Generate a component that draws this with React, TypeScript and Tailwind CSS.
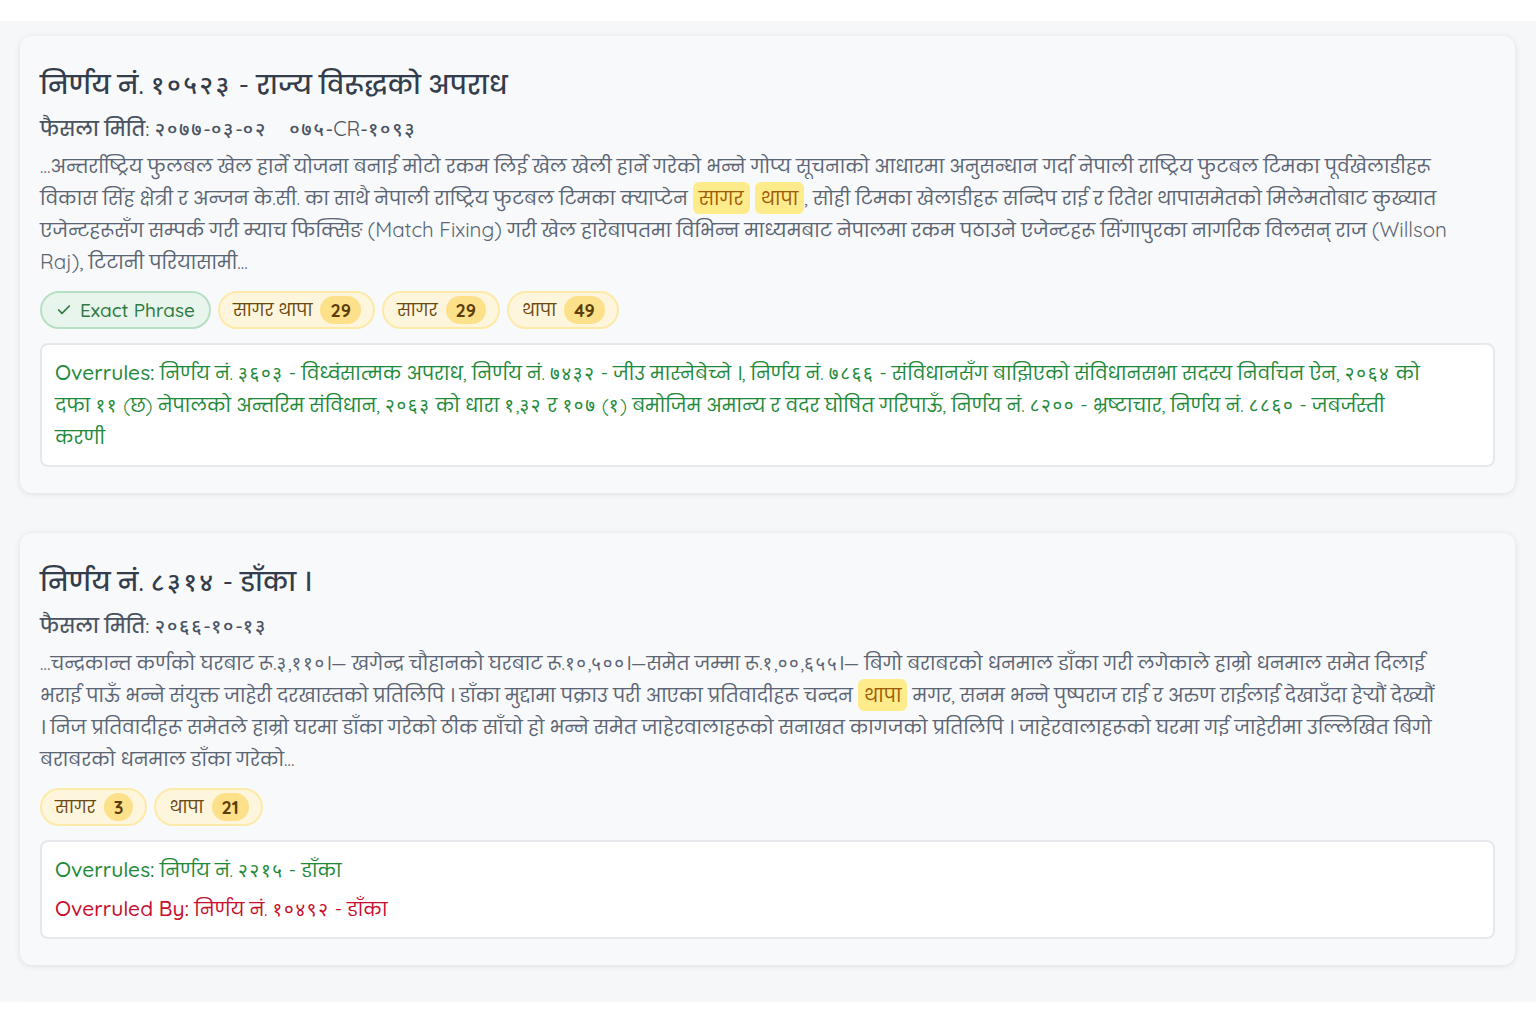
import * as React from 'react';

const base = { fontFamily: '"Quicksand", "Poppins", sans-serif' };
const digitFont = {
  fontFamily: '"Noto Sans Devanagari", "Noto Sans", sans-serif',
  letterSpacing: '0.09em',
  lineHeight: 1,
};

// Poppins draws Devanagari digits as latin ones, so give digit runs another face
function d(s: string): React.ReactNode {
  return s.split(/([०-९]+)/).map((part, i) =>
    /[०-९]/.test(part) ? (
      <span key={i} style={digitFont}>
        {part}
      </span>
    ) : (
      part
    ),
  );
}

// latin runs inside Devanagari text sit a touch bigger in the design
function L({ children }: { children: string }) {
  return <span className="text-[20.5px] leading-none">{children}</span>;
}

function Label({ children }: { children: string }) {
  return <span className="text-[21px] font-medium leading-none">{children}</span>;
}

type Chip = { label: string; count: number };

function Hl({ children }: { children: string }) {
  return (
    <mark className="rounded-md bg-[#fdeb8c] px-[6px] py-[4px] text-[#a15c07]">
      {children}
    </mark>
  );
}

function KeywordChip({ label, count }: Chip) {
  return (
    <span className="inline-flex h-[38px] items-center gap-[8px] rounded-full border-2 border-[#fde9a8] bg-[#fef6dc] pl-[13px] pr-[12px] text-[17px] text-[#6b4a12]">
      {label}
      <span className="inline-flex h-[28px] min-w-[28px] items-center justify-center rounded-full bg-[#fde08a] px-[10px] text-[18px] font-bold text-[#5c3d0a]">
        {count}
      </span>
    </span>
  );
}

function ExactChip() {
  return (
    <span className="inline-flex h-[38px] items-center gap-[8px] rounded-full border-2 border-[#b7dfc4] bg-[#e8f5ec] px-[14px] text-[19px] font-medium text-[#2f7a44]">
      <svg
        className="size-4"
        viewBox="0 0 24 24"
        fill="none"
        stroke="currentColor"
        strokeWidth="2.5"
        strokeLinecap="round"
        strokeLinejoin="round"
      >
        <path d="M20 6 9 17l-5-5" />
      </svg>
      Exact Phrase
    </span>
  );
}

function Card({
  title,
  meta,
  snippet,
  chips,
  exact,
  relations,
}: {
  title: string;
  meta: React.ReactNode;
  snippet: React.ReactNode;
  chips: Chip[];
  exact?: boolean;
  relations: React.ReactNode;
}) {
  return (
    <div className="rounded-xl bg-[#f8f9fb] px-5 pb-[26px] pt-[29px] shadow-[0_1px_6px_rgba(15,23,42,0.10)]">
      <h2 className="text-[26px] font-medium leading-[40px] text-[#333d4b]">
        {d(title)}
      </h2>
      <div className="mt-[9px] text-[19.5px] font-medium leading-[30px] text-[#4a5462]">
        {meta}
      </div>
      <p className="mt-[6px] text-[18.7px] leading-[32px] text-[#5b6573]">
        {snippet}
      </p>
      <div className="mt-[13px] flex gap-[7px]">
        {exact && <ExactChip />}
        {chips.map((c) => (
          <KeywordChip key={c.label} {...c} />
        ))}
      </div>
      <div className="mt-[14px] rounded-lg border-2 border-[#e6e8eb] bg-white px-[13px] py-[12px] text-[18.7px] leading-[32px]">
        {relations}
      </div>
    </div>
  );
}

export default function App() {
  return (
    <div className="min-h-screen bg-white" style={base}>
      <div className="mt-[21px] h-[981px] overflow-hidden bg-[#f6f7f9]">
        <div className="flex w-[1515px] flex-col gap-10 pl-5 pt-[15px]">
          <Card
            title="निर्णय नं. १०५२३ - राज्य विरूद्धको अपराध"
            meta={
              <span>
                {d('फैसला मिति: २०७७-०३-०२')}
                <span className="ml-[22px]">
                  {d('०७५-')}
                  <span className="text-[20.5px] font-normal leading-none">CR</span>
                  {d('-१०९३')}
                </span>
              </span>
            }
            snippet={
              <>
                …अन्तर्राष्ट्रिय फुलबल खेल हार्ने योजना बनाई मोटो रकम लिई खेल खेली
                हार्ने गरेको भन्ने गोप्य सूचनाको आधारमा अनुसन्धान गर्दा नेपाली
                राष्ट्रिय फुटबल टिमका पूर्वखेलाडीहरू
                <br />
                विकास सिंह क्षेत्री र अन्जन के.सी. का साथै नेपाली राष्ट्रिय फुटबल
                टिमका क्याप्टेन <Hl>सागर</Hl> <Hl>थापा</Hl>, सोही टिमका खेलाडीहरू
                सन्दिप राई र रितेश थापासमेतको मिलेमतोबाट कुख्यात
                <br />
                एजेन्टहरूसँग सम्पर्क गरी म्याच फिक्सिङ <L>(Match Fixing)</L> गरी खेल
                हारेबापतमा विभिन्न माध्यमबाट नेपालमा रकम पठाउने एजेन्टहरू
                सिंगापुरका नागरिक विलसन् राज <L>(Willson</L>
                <br />
                <L>Raj),</L> टिटानी परियासामी…
              </>
            }
            exact
            chips={[
              { label: 'सागर थापा', count: 29 },
              { label: 'सागर', count: 29 },
              { label: 'थापा', count: 49 },
            ]}
            relations={
              <p className="text-[#1f8a3b]">
                <Label>Overrules:</Label>{' '}
                {d(
                  'निर्णय नं. ३६०३ - विध्वंसात्मक अपराध, निर्णय नं. ७४३२ - जीउ मास्नेबेच्ने ।, निर्णय नं. ७८६६ - संविधानसँग बाझिएको संविधानसभा सदस्य निर्वाचन ऐन, २०६४ को',
                )}
                <br />
                {d(
                  'दफा ११ (छ) नेपालको अन्तरिम संविधान, २०६३ को धारा १,३२ र १०७ (१) बमोजिम अमान्य र वदर घोषित गरिपाऊँ, निर्णय नं. ८२०० - भ्रष्टाचार, निर्णय नं. ८८६० - जबर्जस्ती',
                )}
                <br />
                करणी
              </p>
            }
          />
          <Card
            title="निर्णय नं. ८३१४ - डाँका ।"
            meta={<span>{d('फैसला मिति: २०६६-१०-१३')}</span>}
            snippet={
              <>
                {d(
                  '…चन्द्रकान्त कर्णको घरबाट रू.३,११०।— खगेन्द्र चौहानको घरबाट रू.१०,५००।—समेत जम्मा रू.१,००,६५५।— बिगो बराबरको धनमाल डाँका गरी लगेकाले हाम्रो धनमाल समेत दिलाई',
                )}
                <br />
                भराई पाऊँ भन्ने संयुक्त जाहेरी दरखास्तको प्रतिलिपि । डाँका
                मुद्दामा पक्राउ परी आएका प्रतिवादीहरू चन्दन <Hl>थापा</Hl> मगर, सनम
                भन्ने पुष्पराज राई र अरुण राईलाई देखाउँदा हेर्‍यौं देख्यौं
                <br />। निज प्रतिवादीहरू समेतले हाम्रो घरमा डाँका गरेको ठीक साँचो हो
                भन्ने समेत जाहेरवालाहरूको सनाखत कागजको प्रतिलिपि । जाहेरवालाहरूको
                घरमा गई जाहेरीमा उल्लिखित बिगो
                <br />
                बराबरको धनमाल डाँका गरेको…
              </>
            }
            chips={[
              { label: 'सागर', count: 3 },
              { label: 'थापा', count: 21 },
            ]}
            relations={
              <>
                <p className="text-[#1f8a3b]">
                  <Label>Overrules:</Label> {d('निर्णय नं. २२१५ - डाँका')}
                </p>
                <p className="mt-[7px] text-[#c8102e]">
                  <Label>Overruled By:</Label> {d('निर्णय नं. १०४९२ - डाँका')}
                </p>
              </>
            }
          />
          <div className="h-[200px] rounded-xl bg-[#f8f9fb] shadow-[0_1px_6px_rgba(15,23,42,0.10)]" />
        </div>
      </div>
    </div>
  );
}
